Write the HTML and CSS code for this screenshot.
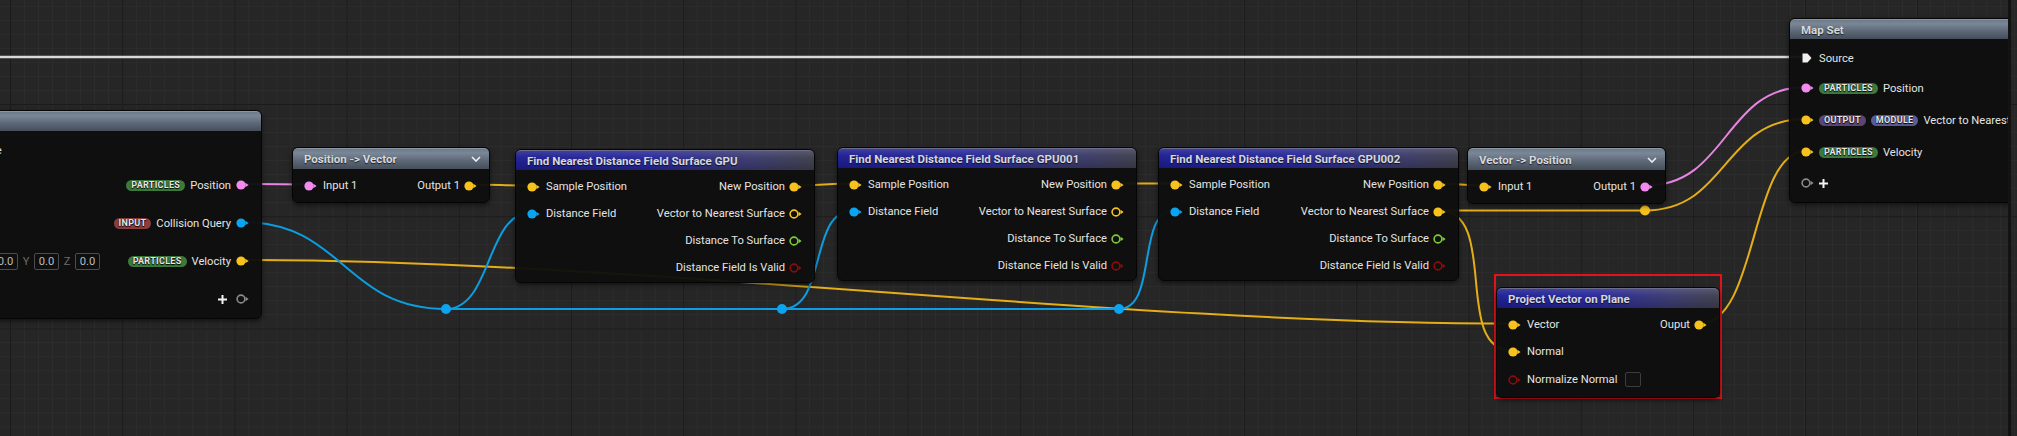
FILE: index.html
```html
<!DOCTYPE html>
<html lang="en">
<head>
    <meta charset="UTF-8">
    <title>Niagara Module Graph</title>
    <link rel="stylesheet" href="styles.css">
</head>
<body>
    <svg class="defs" width="0" height="0">
        <symbol id="pin-fill" viewBox="0 0 13 10">
            <circle cx="5" cy="5" r="4.6" fill="currentColor"/>
            <path d="M9.3 2.8 L12.6 5 L9.3 7.2 Z" fill="currentColor"/>
        </symbol>
        <symbol id="pin-ring" viewBox="0 0 13 10">
            <circle cx="5" cy="5" r="3.9" fill="#101010" stroke="currentColor" stroke-width="1.6"/>
            <path d="M9.6 2.8 L12.6 5 L9.6 7.2 Z" fill="currentColor"/>
        </symbol>
        <symbol id="pin-exec" viewBox="0 0 13 10">
            <path d="M1.5 0.5 H6.5 L10.5 5 L6.5 9.5 H1.5 Z" fill="#f0f0f0"/>
        </symbol>
        <symbol id="plus" viewBox="0 0 9 9">
            <rect x="3.5" y="0" width="2" height="9" fill="#f2f2f2"/>
            <rect x="0" y="3.5" width="9" height="2" fill="#f2f2f2"/>
        </symbol>
        <symbol id="chevron" viewBox="0 0 10 6">
            <polyline points="1,1 5,5 9,1" fill="none" stroke="#eeeeee" stroke-width="1.6"/>
        </symbol>
    </svg>

    <div class="screen">
        <div class="graph">
            <!-- wires sit under the nodes -->
            <svg class="wires" width="2008" height="436">
                <path class="exec" d="M0 57 L1802 57"/>

                <path class="pink" d="M242 184 L308 184.5"/>
                <path class="pink" d="M1646 185.5 C1728 185.5, 1724 87, 1806 87"/>

                <path class="gold" d="M470 184.5 C500 184.5, 502 185.5, 531 185.5"/>
                <path class="gold" d="M795 185.5 C824 185.5, 824 183.5, 853 183.5"/>
                <path class="gold" d="M1117 183.5 C1146 183.5, 1146 183.5, 1174 183.5"/>
                <path class="gold" d="M1439 183.5 C1460 183.5, 1462 185.5, 1483 185.5"/>
                <path class="gold" d="M1439 210.5 L1645 210.5"/>
                <path class="gold" d="M1645 210.5 C1728 210.5, 1722 119, 1806 119"/>
                <path class="gold" d="M1439 210.5 C1500 210.5, 1452 350.5, 1512 350.5"/>
                <path class="gold" d="M1700 323.5 C1758 323.5, 1750 151, 1806 151"/>
                <path class="gold" d="M242 260 C642 260, 1112 323.5, 1512 323.5"/>

                <path class="blue" d="M242 222 C344 222, 344 309, 446 309"/>
                <path class="blue" d="M446 309 L1119 309"/>
                <path class="blue" d="M446 309 C492 309, 486 212.5, 531 212.5"/>
                <path class="blue" d="M782 309 C828 309, 808 210.5, 853 210.5"/>
                <path class="blue" d="M1119 309 C1158 309, 1136 210.5, 1174 210.5"/>

                <circle class="knot blue-knot" cx="446" cy="309" r="5"/>
                <circle class="knot blue-knot" cx="782" cy="309" r="5"/>
                <circle class="knot blue-knot" cx="1119" cy="309" r="5"/>
                <circle class="knot gold-knot" cx="1645" cy="210.5" r="5"/>
            </svg>

            <!-- Map Get (cut off on the left) -->
            <div class="node map-get">
                <div class="header grey"></div>
                <div class="body">
                    <div class="row r30">
                        <div class="in"><svg class="pin"><use href="#pin-exec"/></svg><span>Source</span></div>
                    </div>
                    <div class="row r40">
                        <div class="in"></div>
                        <div class="out"><span class="tag particles">PARTICLES</span><span>Position</span><svg class="pin pink-pin"><use href="#pin-fill"/></svg></div>
                    </div>
                    <div class="row r36">
                        <div class="in"></div>
                        <div class="out"><span class="tag input">INPUT</span><span>Collision Query</span><svg class="pin blue-pin"><use href="#pin-fill"/></svg></div>
                    </div>
                    <div class="row r40">
                        <div class="in vec">
                            <span class="axis">X</span><span class="field">0.0</span>
                            <span class="axis">Y</span><span class="field">0.0</span>
                            <span class="axis">Z</span><span class="field">0.0</span>
                        </div>
                        <div class="out"><span class="tag particles">PARTICLES</span><span>Velocity</span><svg class="pin gold-pin"><use href="#pin-fill"/></svg></div>
                    </div>
                    <div class="row r36">
                        <div class="in"></div>
                        <div class="out add"><svg class="plus"><use href="#plus"/></svg><svg class="pin grey-pin"><use href="#pin-ring"/></svg></div>
                    </div>
                </div>
            </div>

            <div class="node pos-to-vec">
                <div class="header grey tall">
                    <span class="title">Position -&gt; Vector</span>
                    <svg class="chevron"><use href="#chevron"/></svg>
                </div>
                <div class="body">
                    <div class="row">
                        <div class="in"><svg class="pin pink-pin"><use href="#pin-fill"/></svg><span>Input 1</span></div>
                        <div class="out"><span>Output 1</span><svg class="pin gold-pin"><use href="#pin-fill"/></svg></div>
                    </div>
                </div>
            </div>

            <div class="node find find-1">
                <div class="header blue-hdr"><span class="title">Find Nearest Distance Field Surface GPU</span></div>
                <div class="body">
                    <div class="row">
                        <div class="in"><svg class="pin gold-pin"><use href="#pin-fill"/></svg><span>Sample Position</span></div>
                        <div class="out"><span>New Position</span><svg class="pin gold-pin"><use href="#pin-fill"/></svg></div>
                    </div>
                    <div class="row">
                        <div class="in"><svg class="pin blue-pin"><use href="#pin-fill"/></svg><span>Distance Field</span></div>
                        <div class="out"><span>Vector to Nearest Surface</span><svg class="pin gold-pin"><use href="#pin-ring"/></svg></div>
                    </div>
                    <div class="row">
                        <div class="in"></div>
                        <div class="out"><span>Distance To Surface</span><svg class="pin green-pin"><use href="#pin-ring"/></svg></div>
                    </div>
                    <div class="row">
                        <div class="in"></div>
                        <div class="out"><span>Distance Field Is Valid</span><svg class="pin red-pin"><use href="#pin-ring"/></svg></div>
                    </div>
                </div>
            </div>

            <div class="node find find-2">
                <div class="header blue-hdr"><span class="title">Find Nearest Distance Field Surface GPU001</span></div>
                <div class="body">
                    <div class="row">
                        <div class="in"><svg class="pin gold-pin"><use href="#pin-fill"/></svg><span>Sample Position</span></div>
                        <div class="out"><span>New Position</span><svg class="pin gold-pin"><use href="#pin-fill"/></svg></div>
                    </div>
                    <div class="row">
                        <div class="in"><svg class="pin blue-pin"><use href="#pin-fill"/></svg><span>Distance Field</span></div>
                        <div class="out"><span>Vector to Nearest Surface</span><svg class="pin gold-pin"><use href="#pin-ring"/></svg></div>
                    </div>
                    <div class="row">
                        <div class="in"></div>
                        <div class="out"><span>Distance To Surface</span><svg class="pin green-pin"><use href="#pin-ring"/></svg></div>
                    </div>
                    <div class="row">
                        <div class="in"></div>
                        <div class="out"><span>Distance Field Is Valid</span><svg class="pin red-pin"><use href="#pin-ring"/></svg></div>
                    </div>
                </div>
            </div>

            <div class="node find find-3">
                <div class="header blue-hdr"><span class="title">Find Nearest Distance Field Surface GPU002</span></div>
                <div class="body">
                    <div class="row">
                        <div class="in"><svg class="pin gold-pin"><use href="#pin-fill"/></svg><span>Sample Position</span></div>
                        <div class="out"><span>New Position</span><svg class="pin gold-pin"><use href="#pin-fill"/></svg></div>
                    </div>
                    <div class="row">
                        <div class="in"><svg class="pin blue-pin"><use href="#pin-fill"/></svg><span>Distance Field</span></div>
                        <div class="out"><span>Vector to Nearest Surface</span><svg class="pin gold-pin"><use href="#pin-fill"/></svg></div>
                    </div>
                    <div class="row">
                        <div class="in"></div>
                        <div class="out"><span>Distance To Surface</span><svg class="pin green-pin"><use href="#pin-ring"/></svg></div>
                    </div>
                    <div class="row">
                        <div class="in"></div>
                        <div class="out"><span>Distance Field Is Valid</span><svg class="pin red-pin"><use href="#pin-ring"/></svg></div>
                    </div>
                </div>
            </div>

            <div class="node vec-to-pos">
                <div class="header grey taller">
                    <span class="title">Vector -&gt; Position</span>
                    <svg class="chevron"><use href="#chevron"/></svg>
                </div>
                <div class="body">
                    <div class="row">
                        <div class="in"><svg class="pin gold-pin"><use href="#pin-fill"/></svg><span>Input 1</span></div>
                        <div class="out"><span>Output 1</span><svg class="pin pink-pin"><use href="#pin-fill"/></svg></div>
                    </div>
                </div>
            </div>

            <div class="selection">
                <div class="node project">
                    <div class="header blue-hdr"><span class="title">Project Vector on Plane</span></div>
                    <div class="body">
                        <div class="row">
                            <div class="in"><svg class="pin gold-pin"><use href="#pin-fill"/></svg><span>Vector</span></div>
                            <div class="out"><span>Ouput</span><svg class="pin gold-pin"><use href="#pin-fill"/></svg></div>
                        </div>
                        <div class="row">
                            <div class="in"><svg class="pin gold-pin"><use href="#pin-fill"/></svg><span>Normal</span></div>
                        </div>
                        <div class="row r29">
                            <div class="in"><svg class="pin red-pin"><use href="#pin-ring"/></svg><span>Normalize Normal</span><span class="check"></span></div>
                        </div>
                    </div>
                </div>
            </div>

            <div class="node map-set">
                <div class="header grey"><span class="title">Map Set</span></div>
                <div class="body">
                    <div class="row r28">
                        <div class="in"><svg class="pin"><use href="#pin-exec"/></svg><span>Source</span></div>
                    </div>
                    <div class="row r32">
                        <div class="in"><svg class="pin pink-pin"><use href="#pin-fill"/></svg><span class="tag particles">PARTICLES</span><span>Position</span></div>
                    </div>
                    <div class="row r32">
                        <div class="in"><svg class="pin gold-pin"><use href="#pin-fill"/></svg><span class="tag output">OUTPUT</span><span class="tag module">MODULE</span><span>Vector to Nearest Surface</span></div>
                    </div>
                    <div class="row r32">
                        <div class="in"><svg class="pin gold-pin"><use href="#pin-fill"/></svg><span class="tag particles">PARTICLES</span><span>Velocity</span></div>
                    </div>
                    <div class="row r30">
                        <div class="in"><svg class="pin grey-pin"><use href="#pin-ring"/></svg><svg class="plus"><use href="#plus"/></svg></div>
                    </div>
                </div>
            </div>
        </div>
        <div class="divider"></div>
    </div>
</body>
</html>
```

FILE: styles.css
```css
body {
    margin: 0;
    width: 2017px;
    height: 436px;
    overflow: hidden;
    font-family: Roboto, "Liberation Sans", sans-serif;
    font-size: 11.2px;
    color: #e4e4e4;
    background-color: #262626;
    background-image:
        linear-gradient(to right, #1b1b1b 1px, transparent 1px),
        linear-gradient(to bottom, #1b1b1b 1px, transparent 1px),
        linear-gradient(to right, #2c2c2c 1px, transparent 1px),
        linear-gradient(to bottom, #2c2c2c 1px, transparent 1px);
    background-size: 112.2px 112.2px, 112.2px 112.2px, 14.025px 14.025px, 14.025px 14.025px;
    background-position: 10px 104px;
}
.defs {
    position: absolute;
}
.screen {
    display: flex;
    height: 436px;
}
.graph {
    position: relative;
    width: 2008px;
    height: 436px;
    overflow: hidden;
    flex: none;
}
.divider {
    width: 3px;
    background: #131313;
}

/* wires */
.wires {
    position: absolute;
    left: 0;
    top: 0;
}
.wires path {
    fill: none;
    stroke-width: 2;
}
.wires .exec {
    stroke: #d8d8d8;
    stroke-width: 2.4;
}
.wires .pink { stroke: #e884e4; }
.wires .gold { stroke: #e4ae16; }
.wires .blue { stroke: #0c9ee0; }
.knot.blue-knot { fill: #0ba4f0; }
.knot.gold-knot { fill: #f5c21c; }

/* nodes */
.node {
    position: absolute;
    background: rgba(14, 15, 14, 0.96);
    border: 1px solid #050505;
    border-radius: 6px;
    box-shadow: 0 2px 5px rgba(0, 0, 0, 0.55);
    box-sizing: border-box;
}
.header {
    height: 20px;
    display: flex;
    align-items: center;
    justify-content: space-between;
    padding: 0 8px 0 11px;
    border-radius: 5px 5px 0 0;
    border-top: 1px solid #8c96a2;
    box-sizing: border-box;
}
.header.tall { height: 21px; }
.header.taller { height: 22px; }
.header.grey {
    background: linear-gradient(to bottom, #6d7a8a 0%, #7a8797 20%, #5c6776 60%, #454e59 100%);
}
.header.blue-hdr {
    border-top-color: #6c6c8c;
    background:
        linear-gradient(to bottom, rgba(255, 255, 255, 0.14) 0%, rgba(255, 255, 255, 0.03) 35%, rgba(0, 0, 0, 0.15) 100%),
        linear-gradient(to right, #1d1d92 0%, #27279a 45%, #3a3a6c 80%, #3e3e4e 100%);
}
.title {
    font-weight: 700;
    font-size: 11.5px;
    color: #d6d8dc;
    text-shadow: 0 1px 1px rgba(0, 0, 0, 0.7);
    white-space: nowrap;
}
.chevron {
    width: 10px;
    height: 6px;
}
.body {
    padding: 3px 0;
}
.row {
    height: 27px;
    display: flex;
    align-items: center;
    justify-content: space-between;
    padding: 0 12px 0 11px;
    white-space: nowrap;
}
.row.r28 { height: 28px; }
.row.r29 { height: 29px; }
.row.r30 { height: 30px; }
.row.r32 { height: 32px; }
.row.r36 { height: 36px; }
.row.r40 { height: 40px; }
.in, .out {
    display: flex;
    align-items: center;
    gap: 6px;
}
.out {
    gap: 4px;
}
.pin {
    width: 13px;
    height: 10px;
    flex: none;
}
.pink-pin { color: #f28af0; }
.gold-pin { color: #f7c21c; }
.blue-pin { color: #0ba4f0; }
.green-pin { color: #7ecb3a; }
.red-pin { color: #8c0b0b; }
.grey-pin { color: #8a8a8a; }
.plus {
    width: 9px;
    height: 9px;
}

.tag {
    height: 11px;
    line-height: 11px;
    padding: 0 5px;
    border-radius: 6px;
    font-size: 9px;
    font-weight: 700;
    letter-spacing: 0.3px;
    color: #e6e6e6;
    text-shadow: 0 0 1px #000, 0 1px 1px #000;
}
.tag.particles { background: #3c7a3c; }
.tag.input { background: #8b3c3c; }
.tag.output { background: #5a4478; }
.tag.module { background: #5b5b99; }

/* individual nodes */
.map-get {
    left: -64px;
    top: 110px;
    width: 326px;
}
.map-get .body {
    padding: 4px 0 1px;
}
.map-get .out {
    gap: 5px;
}
.map-get .add {
    gap: 9px;
}
.vec {
    margin-left: 33px;
    gap: 4px;
}
.axis {
    width: 8px;
    text-align: center;
    color: #6e6e6e;
}
.field {
    width: 25px;
    height: 17px;
    box-sizing: border-box;
    border: 1px solid #4c4c4c;
    border-radius: 2px;
    line-height: 15px;
    text-align: center;
    color: #bdbdbd;
}
.pos-to-vec {
    left: 292px;
    top: 147px;
    width: 198px;
}
.vec-to-pos {
    left: 1467px;
    top: 147px;
    width: 199px;
}
.find {
    width: 300px;
}
.find .body {
    padding: 3px 0 1px;
}
.find-1 { left: 515px; top: 149px; }
.find-2 { left: 837px; top: 147px; }
.find-3 { left: 1158px; top: 147px; width: 301px; }

.selection {
    position: absolute;
    left: 1494px;
    top: 274px;
    width: 228px;
    height: 125px;
    box-sizing: border-box;
    border: 2px solid #e3121c;
    padding-top: 11px;
}
.selection .node {
    position: static;
    width: 100%;
}
.check {
    width: 16px;
    height: 15px;
    box-sizing: border-box;
    border: 1px solid #3c3c3c;
    border-radius: 2px;
    background: #121212;
    margin-left: 2px;
}
.map-set {
    left: 1789px;
    top: 18px;
    width: 280px;
}
.map-set .body {
    padding: 5px 0 4px;
}
.map-set .in {
    gap: 5px;
}
```
